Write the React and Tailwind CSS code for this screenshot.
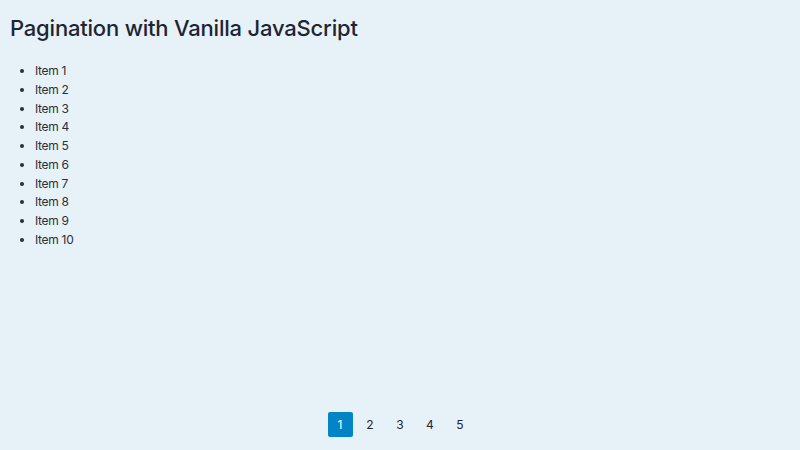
export default function App() {
  const items = Array.from({ length: 10 }, (_, i) => `Item ${i + 1}`);
  const pages = [1, 2, 3, 4, 5];

  return (
    <div className="flex h-screen flex-col bg-[#e6f2f8] px-[10px] font-['Inter',sans-serif] text-[#1f2433]">
      <h1 className="mt-[13px] text-[22px] leading-[30px] font-medium tracking-[-0.2px]">Pagination with Vanilla JavaScript</h1>

      <ul className="mt-[19px] list-disc pl-[25px] text-[12px] leading-[18.75px] tracking-[-0.3px] text-[#2a2f3a]">
        {items.map((item) => (
          <li key={item}>{item}</li>
        ))}
      </ul>

      {/* page buttons */}
      <div className="mt-auto mb-[13px] flex justify-center gap-[5px]">
        {pages.map((p) => (
          <button
            key={p}
            className={
              p === 1
                ? 'h-[25px] w-[25px] rounded-[2px] bg-[#0284c7] text-[12px] text-white'
                : 'h-[25px] w-[25px] rounded-[2px] text-[12px] text-[#1f2433]'
            }
          >
            {p}
          </button>
        ))}
      </div>
    </div>
  );
}
